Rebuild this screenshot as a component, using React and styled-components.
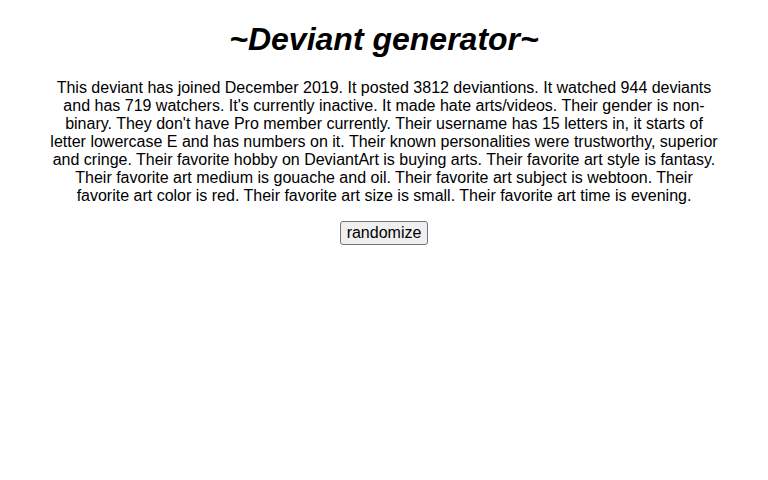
import React, { useState } from 'react';
import styled, { createGlobalStyle } from 'styled-components';

const GlobalStyle = createGlobalStyle`
  body {
    margin: 8px;
    background: #ffffff;
    color: #000000;
    font-family: "Liberation Sans", Arial, sans-serif;
  }
`

const Page = styled.div`
  display: flex;
  flex-direction: column;
  align-items: center;
  text-align: center;
`

const Title = styled.h1`
  font-size: 32px;
  font-weight: 700;
  font-style: italic;
  margin: 13px 0 21px;
`

const Description = styled.p`
  width: 672px;
  margin: 0 0 16px;
  font-size: 16px;
  line-height: normal;
`

const Randomize = styled.button`
  font-family: "Liberation Sans", Arial, sans-serif;
  font-size: 16px;
  color: #000;
  background: #efefef;
  border: 1px solid #767676;
  border-radius: 3px;
  padding: 2px 6px;
  cursor: pointer;
`

function App() {
  const [text] = useState(
    "This deviant has joined December 2019. It posted 3812 deviantions. It watched 944 deviants and has 719 watchers. It's currently inactive. It made hate arts/videos. Their gender is non-binary. They don't have Pro member currently. Their username has 15 letters in, it starts of letter lowercase E and has numbers on it. Their known personalities were trustworthy, superior and cringe. Their favorite hobby on DeviantArt is buying arts. Their favorite art style is fantasy. Their favorite art medium is gouache and oil. Their favorite art subject is webtoon. Their favorite art color is red. Their favorite art size is small. Their favorite art time is evening."
  )

  return (
    <Page>
      <GlobalStyle />
      <Title>~Deviant generator~</Title>
      <Description>{text}</Description>
      <Randomize>randomize</Randomize>
    </Page>
  )
}

export default App
